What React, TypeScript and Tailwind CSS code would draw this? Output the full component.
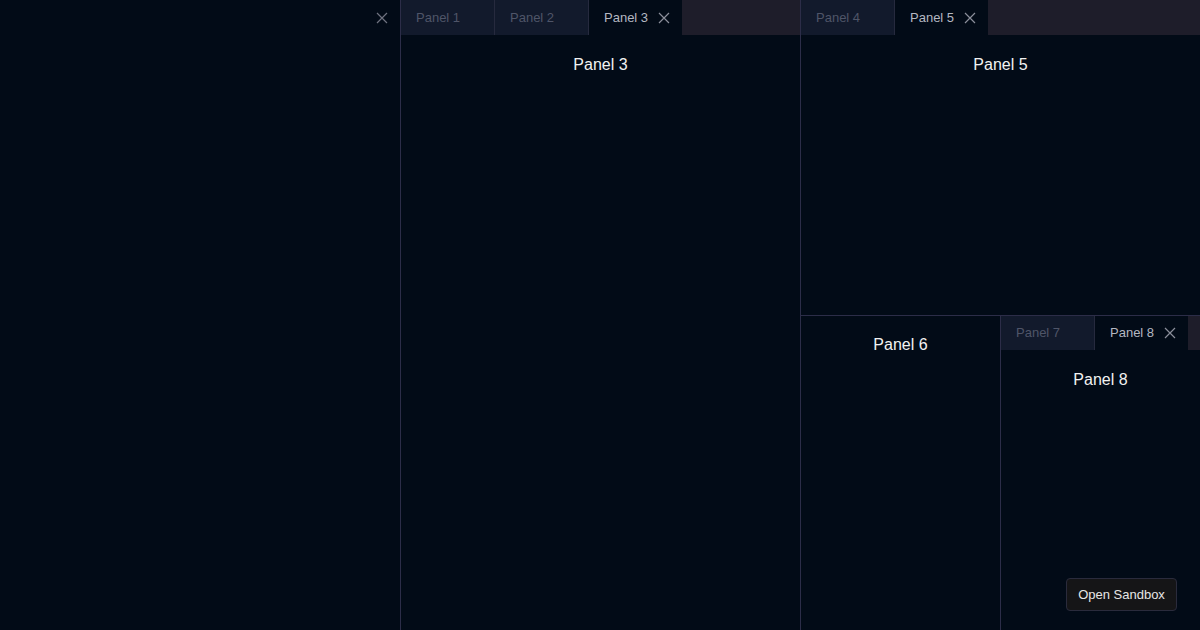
import React from 'react'

type Tab = { label: string; active?: boolean }

function CloseIcon({ className = '' }: { className?: string }) {
  return (
    <svg width="12" height="12" viewBox="0 0 12 12" className={className} fill="none" stroke="currentColor" strokeWidth="1.2">
      <path d="M1 1l10 10M11 1L1 11" />
    </svg>
  )
}

function TabBar({ tabs, short = false }: { tabs: Tab[]; short?: boolean }) {
  return (
    <div className={short ? 'flex h-[34px] shrink-0 bg-[#1e1d2a]' : 'flex h-[35px] shrink-0 bg-[#1e1d2a]'}>
      {tabs.map(t => (
        <div
          key={t.label}
          className={
            t.active
              ? 'flex w-[93px] shrink-0 items-center bg-[#020b17] pl-[15px] pr-3 text-[13px] text-[#b4b8c2]'
              : 'flex w-[94px] shrink-0 items-center border-r border-[#262a3e] bg-[#121a2c] pl-[15px] pr-3 text-[13px] text-[#4f5568]'
          }
        >
          <span className="flex-1">{t.label}</span>
          {t.active && <CloseIcon className="text-[#8b8f9b]" />}
        </div>
      ))}
    </div>
  )
}

function Title({ children }: { children: React.ReactNode }) {
  return <div className="pt-[18px] text-center text-base text-[#f2f2f2]">{children}</div>
}

export default function App() {
  return (
    <div
      className="relative flex h-[630px] w-[1200px] overflow-hidden bg-[#020b17]"
      style={{ fontFamily: '"Liberation Sans", Arial, sans-serif' }}
    >
      {/* left group */}
      <div className="flex w-[400px] shrink-0 flex-col">
        <div className="flex h-[35px] items-center justify-end pr-3">
          <CloseIcon className="text-[#6f7380]" />
        </div>
      </div>

      {/* middle group */}
      <div className="flex w-[400px] shrink-0 flex-col border-l border-[#2c2d48]">
        <TabBar tabs={[{ label: 'Panel 1' }, { label: 'Panel 2' }, { label: 'Panel 3', active: true }]} />
        <Title>Panel 3</Title>
      </div>

      {/* right column */}
      <div className="flex flex-1 flex-col border-l border-[#2c2d48]">
        <div className="flex h-[316px] shrink-0 flex-col border-b border-[#2c2d48]">
          <TabBar tabs={[{ label: 'Panel 4' }, { label: 'Panel 5', active: true }]} />
          <Title>Panel 5</Title>
        </div>
        <div className="flex flex-1">
          <div className="w-[199px] shrink-0 pt-[17px]">
            <div className="text-center text-base text-[#f2f2f2]">Panel 6</div>
          </div>
          <div className="flex flex-1 flex-col border-l border-[#2c2d48]">
            <TabBar short tabs={[{ label: 'Panel 7' }, { label: 'Panel 8', active: true }]} />
            <Title>Panel 8</Title>
          </div>
        </div>
      </div>

      <button className="absolute bottom-[19px] right-[23px] h-[33px] w-[111px] rounded border border-[#2a2b3c] bg-[#151517] text-[13px] text-[#e6e6e6]">
        Open Sandbox
      </button>
    </div>
  )
}
